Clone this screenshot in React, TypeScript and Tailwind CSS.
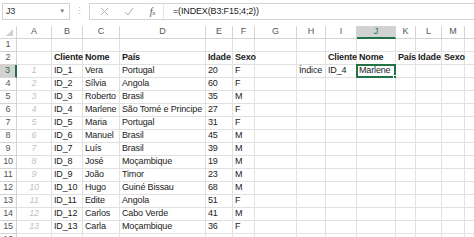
import React from 'react'

const cols = [
  { key: 'A', w: 35 },
  { key: 'B', w: 31 },
  { key: 'C', w: 37 },
  { key: 'D', w: 86 },
  { key: 'E', w: 27 },
  { key: 'F', w: 22 },
  { key: 'G', w: 42 },
  { key: 'H', w: 29 },
  { key: 'I', w: 31 },
  { key: 'J', w: 39 },
  { key: 'K', w: 20 },
  { key: 'L', w: 26 },
  { key: 'M', w: 23 },
  { key: 'N', w: 40 },
]

const clientes: [string, string, string, string, string][] = [
  ['ID_1', 'Vera', 'Portugal', '20', 'F'],
  ['ID_2', 'Sílvia', 'Angola', '60', 'F'],
  ['ID_3', 'Roberto', 'Brasil', '35', 'M'],
  ['ID_4', 'Marlene', 'São Tomé e Principe', '27', 'F'],
  ['ID_5', 'Maria', 'Portugal', '31', 'F'],
  ['ID_6', 'Manuel', 'Brasil', '45', 'M'],
  ['ID_7', 'Luís', 'Brasil', '39', 'M'],
  ['ID_8', 'José', 'Moçambique', '19', 'M'],
  ['ID_9', 'João', 'Timor', '23', 'M'],
  ['ID_10', 'Hugo', 'Guiné Bissau', '68', 'M'],
  ['ID_11', 'Edite', 'Angola', '51', 'F'],
  ['ID_12', 'Carlos', 'Cabo Verde', '41', 'M'],
  ['ID_13', 'Carla', 'Moçambique', '36', 'F'],
]

type Cell = { text: string; bold?: boolean; muted?: boolean }

function buildRow(r: number): Record<string, Cell> {
  const row: Record<string, Cell> = {}
  if (r === 2) {
    ;['Cliente', 'Nome', 'País', 'Idade', 'Sexo'].forEach((h, i) => {
      row['BCDEF'[i]] = { text: h, bold: true }
      row['IJKLM'[i]] = { text: h, bold: true }
    })
  }
  if (r >= 3 && r <= 15) {
    const d = clientes[r - 3]
    row.A = { text: String(r - 2), muted: true }
    d.forEach((v, i) => (row['BCDEF'[i]] = { text: v }))
  }
  if (r === 3) {
    row.H = { text: 'Índice' }
    row.I = { text: 'ID_4' }
    row.J = { text: 'Marlene' }
  }
  return row
}

const rows = Array.from({ length: 16 }, (_, i) => i + 1)

export default function App() {
  return (
    <div
      className="relative h-[237px] w-[474px] overflow-hidden bg-white text-[9px] tracking-[-0.15px] text-[#1b1b1b]"
      style={{ fontFamily: '"Liberation Sans", Arial, sans-serif' }}
    >
      {/* formula bar */}
      <div className="flex h-[26px] items-start pt-[3px]">
        <div className="ml-[2px] flex h-[17px] w-[68px] items-center justify-between border border-[#d4d4d4] pl-[3px] pr-[4px] text-[#333]">
          <span>J3</span>
          <span className="text-[6px] text-[#777]">▼</span>
        </div>
        <div className="flex h-[17px] w-[19px] items-center justify-center text-[#b5b5b5]">⋮</div>
        <div className="flex h-[17px] flex-1 border-y border-l border-[#d4d4d4]">
          <div className="flex w-[73px] items-center justify-around pl-[2px]">
            <svg width="9" height="9" viewBox="0 0 9 9" stroke="#b0b0b0" strokeWidth="1" fill="none">
              <path d="M1 1 L8 8 M8 1 L1 8" />
            </svg>
            <svg width="10" height="9" viewBox="0 0 10 9" stroke="#b0b0b0" strokeWidth="1" fill="none">
              <path d="M1 5 L4 8 L9 1" />
            </svg>
            <span className="text-[10px] italic text-[#555]" style={{ fontFamily: '"Liberation Serif", serif' }}>
              f<span className="text-[7px]">x</span>
            </span>
          </div>
          <div className="flex flex-1 items-center border-l border-[#e6e6e6] pl-[9px] text-[#222]">=(INDEX(B3:F15;4;2))</div>
        </div>
      </div>

      {/* sheet grid */}
      <div
        className="grid"
        style={{ gridTemplateColumns: `17px ${cols.map((c) => c.w + 'px').join(' ')}`, gridAutoRows: '13px' }}
      >
        {/* column headers */}
        <div className="relative border-b border-r border-[#d4d4d4]">
          <div className="absolute bottom-[2px] right-[3px] h-0 w-0 border-b-[7px] border-l-[7px] border-b-[#cfcfcf] border-l-transparent" />
        </div>
        {cols.map((c) => (
          <div
            key={c.key}
            className={
              c.key === 'J'
                ? 'flex items-center justify-center border-b-2 border-r border-b-[#217346] border-r-[#d4d4d4] bg-[#d2d2d2] text-[#217346]'
                : 'flex items-center justify-center border-b border-r border-[#d4d4d4] text-[#555]'
            }
          >
            {c.key}
          </div>
        ))}

        {rows.map((r) => {
          const data = buildRow(r)
          return (
            <React.Fragment key={r}>
              <div
                className={
                  r === 3
                    ? 'flex items-center justify-center border-b border-r-2 border-b-[#d4d4d4] border-r-[#217346] bg-[#d2d2d2] text-[#217346]'
                    : 'flex items-center justify-center border-b border-r border-[#d4d4d4] text-[#555]'
                }
              >
                {r}
              </div>
              {cols.map((c) => {
                const cell = data[c.key]
                const selected = r === 3 && c.key === 'J'
                return (
                  <div
                    key={c.key}
                    className={
                      'relative flex items-center overflow-visible whitespace-nowrap border-b border-r border-[#e1e1e1] ' +
                      (cell?.muted ? 'justify-center italic text-[#c2c2c2] ' : 'pl-[2px] ') +
                      (cell?.bold ? 'font-bold ' : '')
                    }
                  >
                    {cell?.text}
                    {selected && (
                      <div className="absolute -left-[1px] -top-[1px] h-[14px] w-[40px] border-2 border-[#217346]">
                        <div className="absolute -bottom-[3px] -right-[3px] h-[4px] w-[4px] border border-white bg-[#217346]" />
                      </div>
                    )}
                  </div>
                )
              })}
            </React.Fragment>
          )
        })}
      </div>
    </div>
  )
}
